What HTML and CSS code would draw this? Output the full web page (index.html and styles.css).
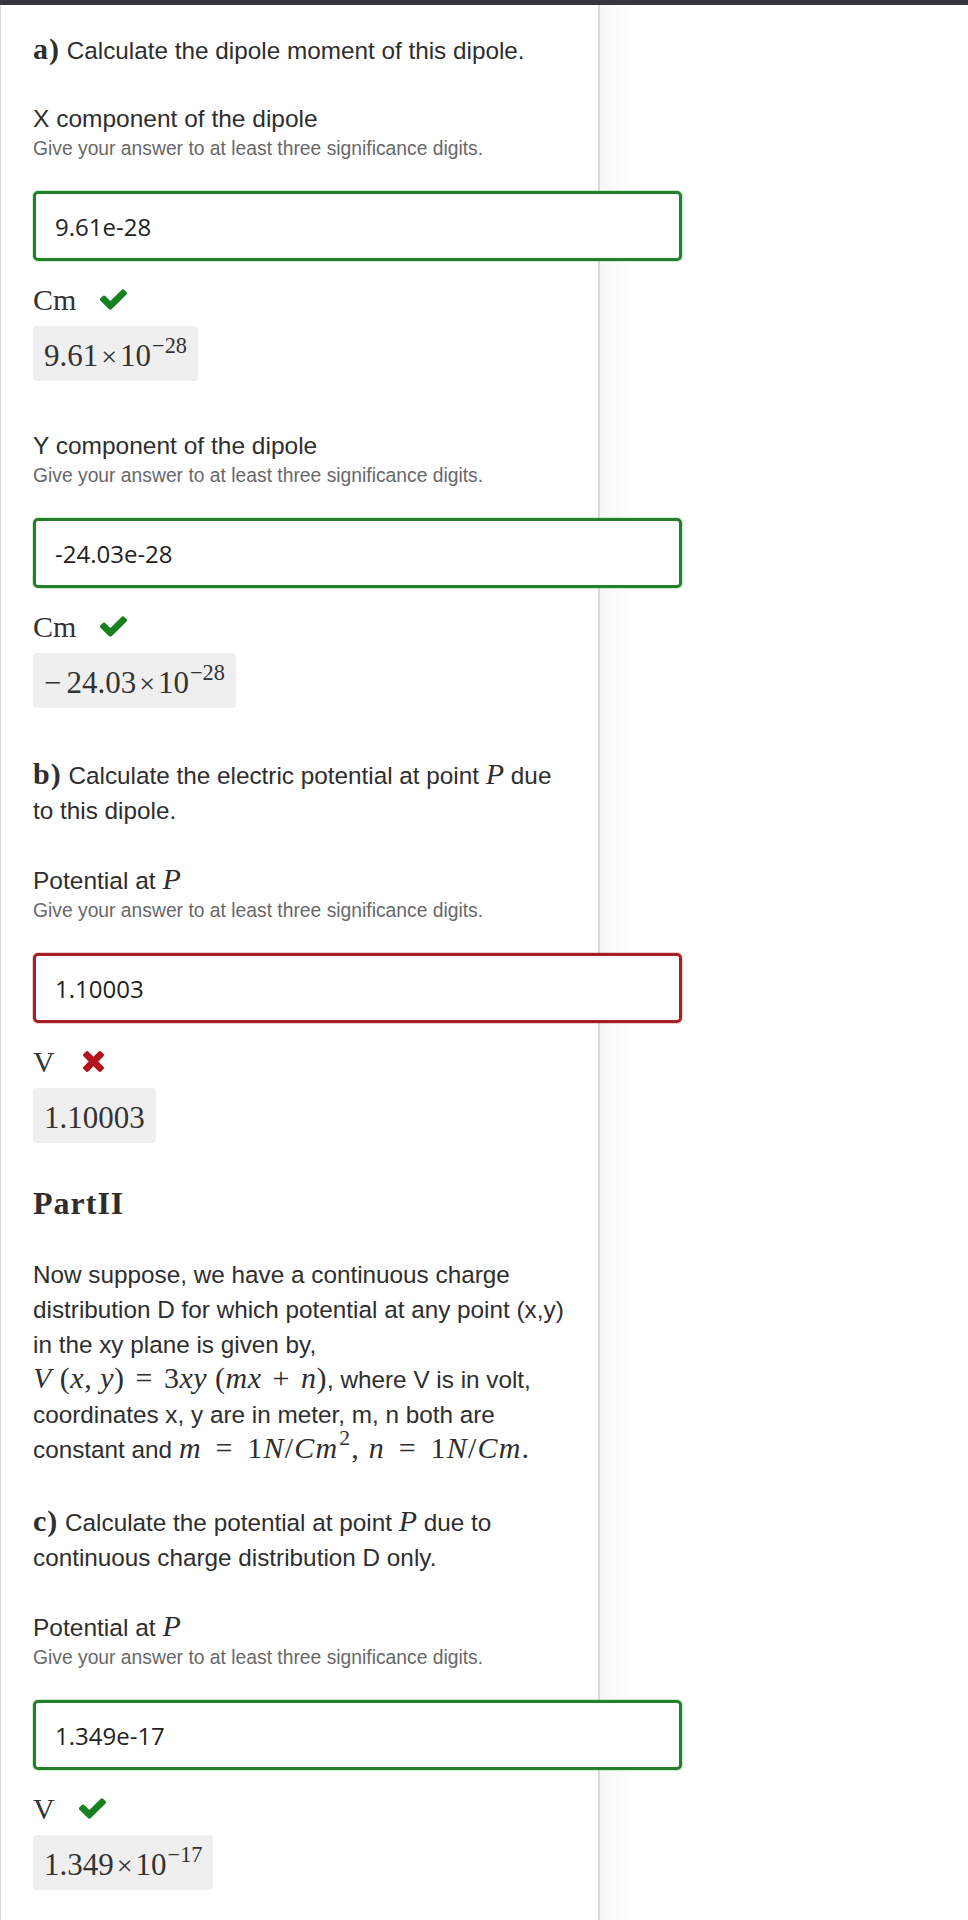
FILE: index.html
```html
<!DOCTYPE html>
<html lang="en">
<head>
    <meta charset="UTF-8">
    <meta name="viewport" content="width=device-width, initial-scale=1.0">
    <title>Dipole question</title>
    <link rel="stylesheet" href="styles.css">
</head>
<body>
    <div class="topbar"></div>

    <div class="layout">
        <div class="question">

            <p class="part"><b class="part-letter">a)</b> Calculate the dipole moment of this dipole.</p>

            <div class="response">
                <div class="prompt">X component of the dipole</div>
                <div class="hint">Give your answer to at least three significance digits.</div>
                <input class="answer correct" type="text" value="9.61e-28" readonly>
                <div class="unit">
                    <span class="unit-name">Cm</span>
                    <svg class="mark check" viewBox="121 334 1550 1188"><path d="M1671 566q0 40-28 68l-724 724-136 136q-28 28-68 28t-68-28l-136-136-362-362q-28-28-28-68t28-68l136-136q28-28 68-28t68 28l294 295 656-657q28-28 68-28t68 28l136 136q28 28 28 68z"/></svg>
                </div>
                <div class="preview">9.61<span class="times">×</span>10<sup>−28</sup></div>
            </div>

            <div class="response">
                <div class="prompt">Y component of the dipole</div>
                <div class="hint">Give your answer to at least three significance digits.</div>
                <input class="answer correct" type="text" value="-24.03e-28" readonly>
                <div class="unit">
                    <span class="unit-name">Cm</span>
                    <svg class="mark check" viewBox="121 334 1550 1188"><path d="M1671 566q0 40-28 68l-724 724-136 136q-28 28-68 28t-68-28l-136-136-362-362q-28-28-28-68t28-68l136-136q28-28 68-28t68 28l294 295 656-657q28-28 68-28t68 28l136 136q28 28 28 68z"/></svg>
                </div>
                <div class="preview"><span class="neg">−</span>24.03<span class="times">×</span>10<sup>−28</sup></div>
            </div>

            <p class="part"><b class="part-letter">b)</b> Calculate the electric potential at point <i class="var">P</i> due to this dipole.</p>

            <div class="response">
                <div class="prompt">Potential at <i class="var">P</i></div>
                <div class="hint">Give your answer to at least three significance digits.</div>
                <input class="answer wrong" type="text" value="1.10003" readonly>
                <div class="unit">
                    <span class="unit-name">V</span>
                    <svg class="mark cross" viewBox="110 366 1188 1188"><path d="M1298 1322q0 40-28 68l-136 136q-28 28-68 28t-68-28l-294-294-294 294q-28 28-68 28t-68-28l-136-136q-28-28-28-68t28-68l294-294-294-294q-28-28-28-68t28-68l136-136q28-28 68-28t68 28l294 294 294-294q28-28 68-28t68 28l136 136q28 28 28 68t-28 68l-294 294 294 294q28 28 28 68z"/></svg>
                </div>
                <div class="preview">1.10003</div>
            </div>

            <h3 class="section-title">PartII</h3>

            <p class="body-text">Now suppose, we have a continuous charge distribution D for which potential at any point (x,y) in the xy plane is given by, <span class="math"><i>V</i> <span class="paren">(</span><i>x</i>, <i>y</i><span class="paren">)</span> <span class="op">=</span> 3<i>xy</i> <span class="paren">(</span><i>mx</i> <span class="op">+</span> <i>n</i><span class="paren">)</span></span>, where V is in volt, coordinates x, y are in meter, m, n both are constant and <span class="math wide"><i>m</i> <span class="op">=</span> 1<i>N</i>/<i>Cm</i><sup>2</sup>, <i>n</i> <span class="op">=</span> 1<i>N</i>/<i>Cm</i>.</span></p>

            <p class="part"><b class="part-letter">c)</b> Calculate the potential at point <i class="var">P</i> due to continuous charge distribution D only.</p>

            <div class="response">
                <div class="prompt">Potential at <i class="var">P</i></div>
                <div class="hint">Give your answer to at least three significance digits.</div>
                <input class="answer correct" type="text" value="1.349e-17" readonly>
                <div class="unit">
                    <span class="unit-name">V</span>
                    <svg class="mark check" viewBox="121 334 1550 1188"><path d="M1671 566q0 40-28 68l-724 724-136 136q-28 28-68 28t-68-28l-136-136-362-362q-28-28-28-68t28-68l136-136q28-28 68-28t68 28l294 295 656-657q28-28 68-28t68 28l136 136q28 28 28 68z"/></svg>
                </div>
                <div class="preview">1.349<span class="times">×</span>10<sup>−17</sup></div>
            </div>

        </div>
        <div class="side"></div>
    </div>
</body>
</html>
```

FILE: styles.css
```css
body {
    margin: 0;
    padding: 0;
    font-family: 'Liberation Sans', Arial, sans-serif;
    font-size: 24.3px;
    line-height: 35px;
    color: #2e2e2e;
    background: #fff;
}

.topbar {
    height: 5px;
    background-color: #36363b;
}

.layout {
    display: flex;
    min-height: 1915px;
}

.question {
    position: relative;
    z-index: 1;
    box-sizing: border-box;
    width: 600px;
    flex-shrink: 0;
    padding: 26px 31px 0 32px;
    border-left: 1px solid #dcdcdc;
    border-right: 2px solid #d9d9d9;
}

.side {
    flex: 1;
    background: linear-gradient(to right, #f7f7f7, #ffffff 30px);
}

.part {
    margin: 0 0 34px 0;
}

.part-letter {
    font-family: 'Liberation Serif', 'Times New Roman', serif;
    font-size: 30px;
    font-weight: bold;
    letter-spacing: 1px;
}

.var {
    font-family: 'Liberation Serif', 'Times New Roman', serif;
    font-size: 30px;
}

.response {
    margin-bottom: 48px;
}

.prompt {
    font-size: 24.5px;
    line-height: 34px;
}

.hint {
    font-size: 19.3px;
    line-height: 26px;
    color: #686868;
}

.answer {
    display: block;
    box-sizing: border-box;
    width: 649px;
    height: 70px;
    margin-top: 29px;
    padding: 0 19px;
    font-family: 'Open Sans', sans-serif;
    font-size: 24px;
    color: #222;
    background: #fff;
    border: 3px solid #24802a;
    border-radius: 5px;
    outline: none;
}

.answer.correct {
    border-color: #22802a;
    box-shadow: 0 0 0 1px rgba(110, 210, 110, 0.35);
}

.answer.wrong {
    border-color: #a3202a;
    box-shadow: 0 0 0 1px rgba(220, 110, 110, 0.35);
}

.unit {
    display: flex;
    align-items: center;
    height: 40px;
    margin-top: 18px;
}

.unit-name {
    font-family: 'Liberation Serif', 'Times New Roman', serif;
    font-size: 30px;
    color: #333;
}

.mark {
    margin-left: 24px;
}

.check {
    width: 27px;
    height: 21px;
    fill: #17801f;
}

.cross {
    width: 21px;
    height: 21px;
    margin-left: 28px;
    fill: #b3131d;
}

.preview {
    display: inline-block;
    margin-top: 7px;
    height: 55px;
    padding: 0 11px;
    font-family: 'Liberation Serif', 'Times New Roman', serif;
    font-size: 31px;
    line-height: 60px;
    color: #333;
    background-color: #efefef;
    border-radius: 4px;
}

.preview .neg {
    margin-right: 5px;
}

.preview .times {
    margin: 0 3px;
    font-size: 28px;
}

.preview sup,
.math sup {
    font-size: 0.72em;
    line-height: 0;
    vertical-align: 0.6em;
    margin-left: 1px;
}

.section-title {
    margin: -8px 0 34px 0;
    font-family: 'Liberation Serif', 'Times New Roman', serif;
    font-size: 32px;
    line-height: 40px;
    letter-spacing: 1px;
}

.body-text {
    margin: 0 0 36px 0;
}

.math {
    font-family: 'Liberation Serif', 'Times New Roman', serif;
    font-size: 30px;
    line-height: 26px;
    letter-spacing: 0.5px;
    white-space: nowrap;
}

.math.wide {
    letter-spacing: 1.2px;
}

.math .op {
    margin: 0 3px;
}

.math.wide .op {
    margin: 0 5px;
}

.math .paren {
    font-style: normal;
}
```
